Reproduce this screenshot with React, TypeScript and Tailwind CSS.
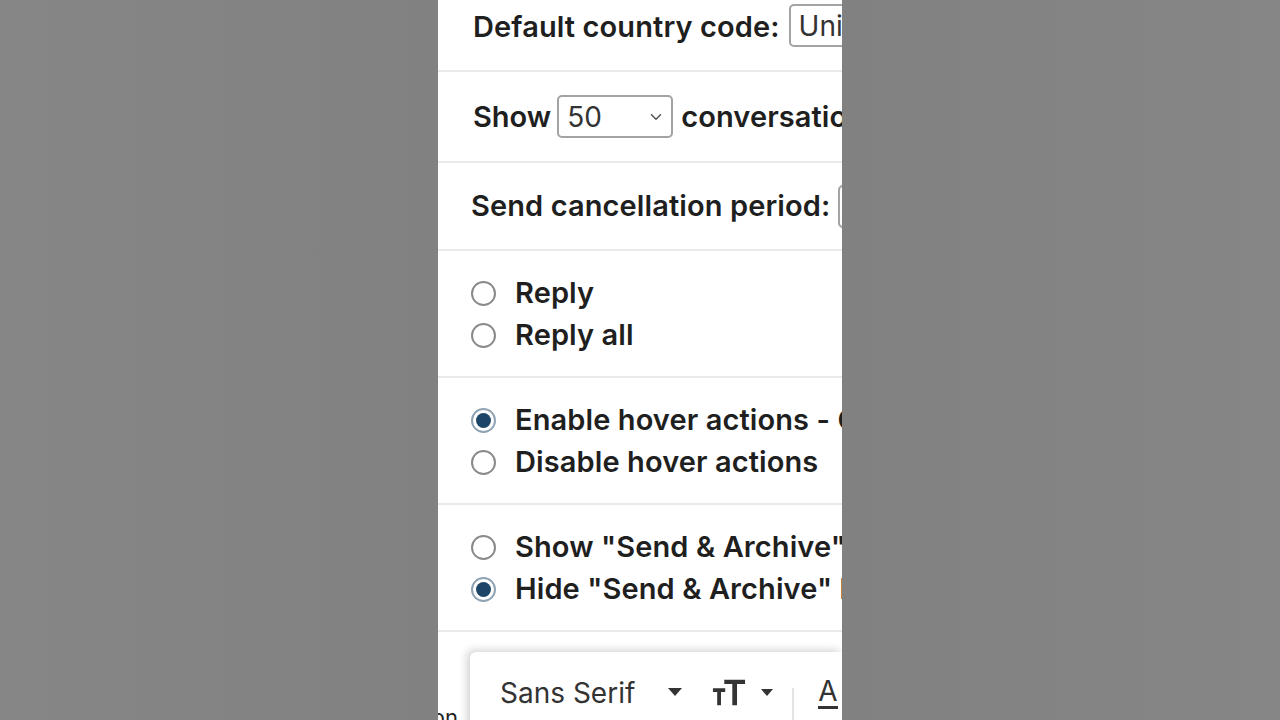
import { ChevronDown } from "lucide-react";

const font = { fontFamily: "Inter, 'Liberation Sans', sans-serif" };

function Radio({ checked }: { checked?: boolean }) {
  if (checked) {
    return (
      <span className="flex h-[25px] w-[25px] shrink-0 items-center justify-center rounded-full border-2 border-[#8fa3b5] bg-white">
        <span className="h-[15px] w-[15px] rounded-full bg-[#1d4568]" />
      </span>
    );
  }
  return <span className="h-[25px] w-[25px] shrink-0 rounded-full border-2 border-[#8a8a8a] bg-white" />;
}

function RadioGroup({ options }: { options: { label: string; checked?: boolean }[] }) {
  return (
    <div className="h-[127px] border-b-2 border-[#e9e9e9] pl-[33px] pt-[21px]">
      {options.map((o) => (
        <div key={o.label} className="flex h-[42px] items-center gap-[19px] whitespace-nowrap">
          <Radio checked={o.checked} />
          <span className="text-[29px] font-semibold tracking-[0.1px] text-[#1f1f1f]">{o.label}</span>
        </div>
      ))}
    </div>
  );
}

export default function App() {
  return (
    <div className="flex h-[720px] w-[1280px] overflow-hidden bg-gradient-to-r from-[#868686] via-[#7f7f7f] to-[#868686]" style={font}>
      <div className="w-[438px] shrink-0" />

      <div className="w-[404px] shrink-0 overflow-hidden bg-white">
        {/* country code */}
        <div className="flex h-[72px] items-start gap-[9px] whitespace-nowrap border-b-2 border-[#e9e9e9] pl-[35px] pt-[4px]">
          <span className="pt-[1px] text-[29px] font-semibold tracking-[0.1px] text-[#1f1f1f]">Default country code:</span>
          <span className="flex h-[43px] w-[120px] shrink-0 items-center rounded-[5px] border-2 border-[#a3a3a3] px-[8px] text-[28px] text-[#333]">
            United States
          </span>
        </div>

        {/* conversations per page */}
        <div className="flex h-[91px] items-center gap-[6px] whitespace-nowrap border-b-2 border-[#e9e9e9] pl-[35px]">
          <span className="text-[29px] font-semibold text-[#1f1f1f]">Show</span>
          <span className="flex h-[43px] w-[116px] shrink-0 items-center justify-between rounded-[5px] border-2 border-[#a3a3a3] pl-[8px] pr-[6px] text-[28px] text-[#333]">
            50
            <ChevronDown className="h-[18px] w-[18px] text-[#555]" strokeWidth={2} />
          </span>
          <span className="ml-[2px] text-[29px] font-semibold tracking-[0.1px] text-[#1f1f1f]">conversations per page</span>
        </div>

        {/* undo send */}
        <div className="flex h-[88px] items-center gap-[8px] whitespace-nowrap border-b-2 border-[#e9e9e9] pl-[33px]">
          <span className="text-[29px] font-semibold tracking-[0.1px] text-[#1f1f1f]">Send cancellation period:</span>
          <span className="h-[43px] w-[80px] shrink-0 rounded-[5px] border-2 border-[#a3a3a3]" />
        </div>

        <RadioGroup options={[{ label: "Reply" }, { label: "Reply all" }]} />
        <RadioGroup
          options={[
            { label: "Enable hover actions - Quickly gain access", checked: true },
            { label: "Disable hover actions" },
          ]}
        />
        <RadioGroup
          options={[
            { label: 'Show "Send & Archive" button in reply' },
            { label: 'Hide "Send & Archive" button in reply', checked: true },
          ]}
        />

        {/* default text style toolbar */}
        <div className="flex h-[90px] items-start">
          <div className="flex h-full w-[32px] shrink-0 items-end justify-end overflow-hidden pr-[12px]">
            <span className="translate-y-[12px] text-[22px] text-[#222]">on</span>
          </div>
          <div className="mt-[20px] flex h-[80px] flex-1 items-center whitespace-nowrap rounded-tl-[6px] bg-white pl-[30px] shadow-[-3px_-2px_8px_rgba(0,0,0,0.18)]">
            <span className="pt-[2px] text-[28px] text-[#333]">Sans Serif</span>
            <svg width="16" height="10" viewBox="0 0 16 10" className="ml-[32px] shrink-0">
              <path d="M1 1h14L8 9z" fill="#333" />
            </svg>
            <svg width="34" height="32" viewBox="0 0 36 32" className="ml-[29px] shrink-0">
              <path d="M1 12h13v4H9.5v14h-4V16H1z" fill="#333" />
              <path d="M13 3h22v4.5h-8.5V30h-5V7.5H13z" fill="#333" />
            </svg>
            <svg width="14" height="9" viewBox="0 0 14 9" className="ml-[14px] shrink-0">
              <path d="M1 1h12L7 8z" fill="#333" />
            </svg>
            <span className="ml-[18px] h-[44px] w-[2px] shrink-0 self-end bg-[#e4e4e4]" />
            <span className="ml-[24px] border-b-[3px] border-[#333] text-[28px] leading-[30px] text-[#333]">A</span>
          </div>
        </div>
      </div>

      <div className="flex-1" />
    </div>
  );
}
